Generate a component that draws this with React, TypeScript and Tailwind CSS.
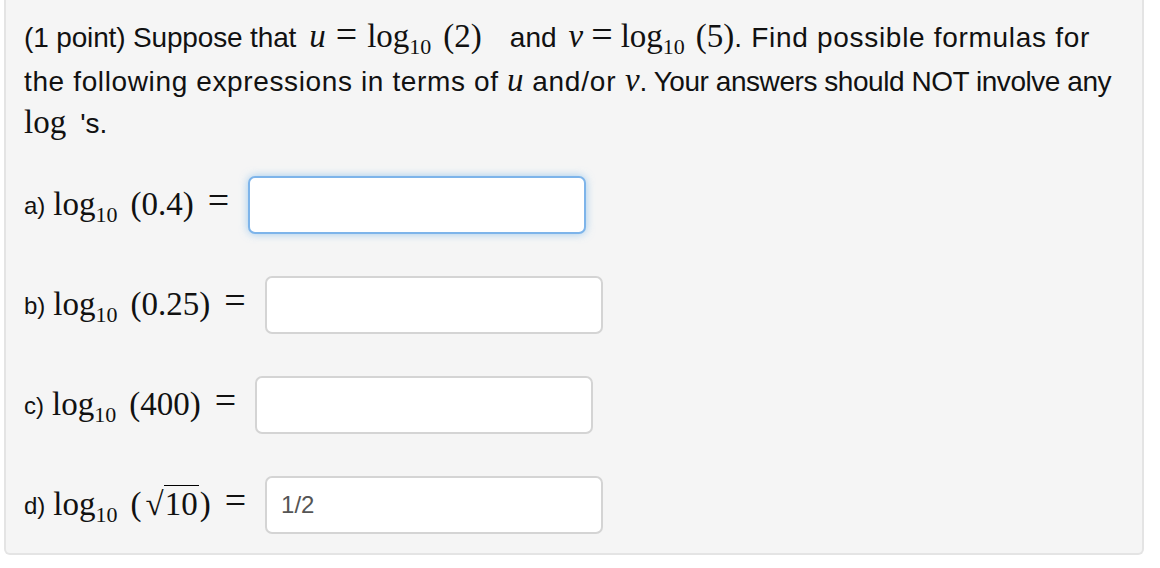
import React from "react"

const serif = "font-['Liberation_Serif','Times_New_Roman',serif]"

function Eq() {
  return <span className={`${serif} text-[38px] leading-[0] px-[1px]`}>=</span>
}

function Log({ arg }: { arg: React.ReactNode }) {
  return (
    <span className={`${serif} text-[33px] whitespace-nowrap`}>
      log
      <span className="text-[22px] relative top-[7px]">10</span>
      <span className="ml-[13px]">{arg}</span>
    </span>
  )
}

function Row({ label, arg, focused, value }: { label: string; arg: React.ReactNode; focused?: boolean; value?: string }) {
  return (
    <div className="flex items-center h-[58px] text-[24px]">
      <span className="mr-[8px] relative top-[1px]">{label}</span>
      <Log arg={arg} />
      <span className="ml-[13px] mr-[18px]">
        <Eq />
      </span>
      <input
        readOnly
        defaultValue={value}
        className={
          "w-[338px] h-[58px] rounded-[7px] bg-white px-[14px] text-[24px] text-[#555] outline-none " +
          (focused
            ? "border-2 border-[#7db4ea] shadow-[0_0_8px_rgba(102,175,233,0.6)]"
            : "border-2 border-[#d4d4d4]")
        }
      />
    </div>
  )
}

export default function App() {
  return (
    <div className="w-[1160px] h-[568px] bg-white font-['Liberation_Sans',Arial,sans-serif] text-[#111]">
      <div className="ml-[4px] w-[1140px] h-[555px] bg-[#f5f5f5] border-2 border-t-0 border-[#e4e4e4] rounded-b-[6px] pl-[18px] pt-[16px]">
        <p className="text-[28px] leading-[41px] whitespace-nowrap">
          <span className="tracking-[-0.15px]">(1 point) Suppose that</span>
          <span className={`${serif} text-[33px] ml-[13px]`}>
            <i>u</i>
            <span className="mx-[9px]">
              <Eq />
            </span>
            log
            <span className="text-[22px] relative top-[7px]">10</span>
            <span className="ml-[12px]">(2)</span>
          </span>
          <span className="ml-[28px]">and</span>
          <span className={`${serif} text-[33px] ml-[12px]`}>
            <i>v</i>
            <span className="mx-[7px]">
              <Eq />
            </span>
            log
            <span className="text-[22px] relative top-[7px]">10</span>
            <span className="ml-[11px]">(5)</span>
          </span>
          <span className="tracking-[0.7px]">. Find possible formulas for</span>
          <br />
          <span className="tracking-[0.63px]">the following expressions in terms of </span>
          <i className={`${serif} text-[33px]`}>u</i>
          <span className="tracking-[0.8px]"> and/or </span>
          <i className={`${serif} text-[33px]`}>v</i>
          <span className="tracking-[-0.45px]">. Your answers should NOT involve any</span>
          <br />
          <span className={`${serif} text-[33px]`}>log</span>
          <span className="ml-[14px]">'s.</span>
        </p>
        <div className="mt-[32px] flex flex-col gap-[42px]">
          <Row label="a)" arg="(0.4)" focused />
          <Row label="b)" arg="(0.25)" />
          <Row label="c)" arg="(400)" />
          <Row
            label="d)"
            arg={
              <span>
                (<span className="ml-[4px]">√</span>
                <span className="border-t-[1.5px] border-black pl-[1px] pr-[1px]">10</span>
                <span className="ml-[1px]">)</span>
              </span>
            }
            value="1/2"
          />
        </div>
      </div>
    </div>
  )
}
